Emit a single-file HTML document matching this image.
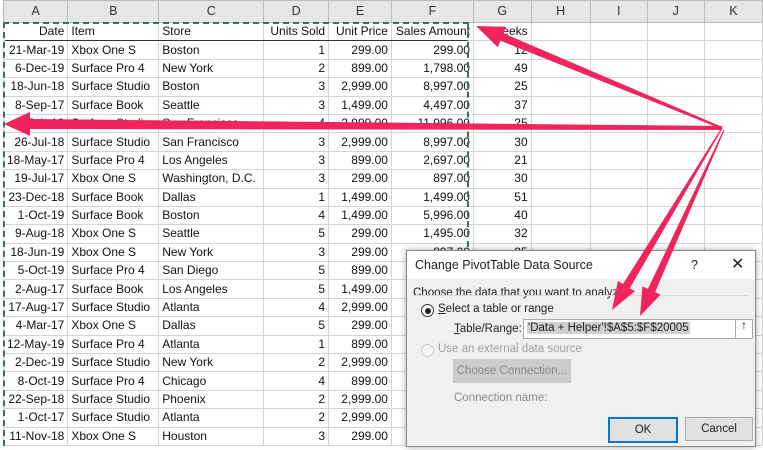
<!DOCTYPE html>
<html style="overflow:hidden;height:450px"><head><style>
body{margin:0;width:763px;height:450px;overflow:hidden;background:#fff;font-family:"Liberation Sans",sans-serif;position:relative}
table{border-collapse:collapse;table-layout:fixed;position:absolute;left:3px;top:0}
td{border:1px solid #d4d4d4;height:17.4px;padding:0 3px;font-size:12px;white-space:nowrap;overflow:hidden;line-height:17px;color:#111}
tr.h td{background:#e6e6e6;height:21px;text-align:center;color:#333;border-color:#bcbcbc;font-size:12.5px}
td.r{text-align:right}
.dlg{position:absolute;left:406px;top:250px;width:348px;height:195px;background:#f0f0f0;border:1px solid #8a8a8a;box-shadow:0 0 6px rgba(0,0,0,.35);font-size:11.5px;color:#222}
.ttl{height:28px;background:#fff;line-height:28px;padding-left:8px;font-size:12.5px;position:relative}
.btn{position:absolute;border:1px solid #adadad;background:#e1e1e1;text-align:center;line-height:22px;height:22px}
</style></head><body>
<table>
<colgroup><col style="width:61px"><col style="width:91px"><col style="width:105px"><col style="width:65px"><col style="width:63px"><col style="width:82px"><col style="width:58px"><col style="width:60px"><col style="width:58px"><col style="width:58px"><col style="width:59px"></colgroup>
<tr class="h"><td>A</td><td>B</td><td>C</td><td>D</td><td>E</td><td>F</td><td>G</td><td>H</td><td>I</td><td>J</td><td>K</td></tr>
<tr><td class="r">Date</td><td>Item</td><td>Store</td><td class="r">Units Sold</td><td class="r">Unit Price</td><td class="r">Sales Amount</td><td class="r">Weeks</td><td></td><td></td><td></td><td></td></tr>
<tr><td class="r">21-Mar-19</td><td>Xbox One S</td><td>Boston</td><td class="r">1</td><td class="r">299.00</td><td class="r">299.00</td><td class="r">12</td><td></td><td></td><td></td><td></td></tr>
<tr><td class="r">6-Dec-19</td><td>Surface Pro 4</td><td>New York</td><td class="r">2</td><td class="r">899.00</td><td class="r">1,798.00</td><td class="r">49</td><td></td><td></td><td></td><td></td></tr>
<tr><td class="r">18-Jun-18</td><td>Surface Studio</td><td>Boston</td><td class="r">3</td><td class="r">2,999.00</td><td class="r">8,997.00</td><td class="r">25</td><td></td><td></td><td></td><td></td></tr>
<tr><td class="r">8-Sep-17</td><td>Surface Book</td><td>Seattle</td><td class="r">3</td><td class="r">1,499.00</td><td class="r">4,497.00</td><td class="r">37</td><td></td><td></td><td></td><td></td></tr>
<tr><td class="r">1-Feb-18</td><td>Surface Studio</td><td>San Francisco</td><td class="r">4</td><td class="r">2,999.00</td><td class="r">11,996.00</td><td class="r">25</td><td></td><td></td><td></td><td></td></tr>
<tr><td class="r">26-Jul-18</td><td>Surface Studio</td><td>San Francisco</td><td class="r">3</td><td class="r">2,999.00</td><td class="r">8,997.00</td><td class="r">30</td><td></td><td></td><td></td><td></td></tr>
<tr><td class="r">18-May-17</td><td>Surface Pro 4</td><td>Los Angeles</td><td class="r">3</td><td class="r">899.00</td><td class="r">2,697.00</td><td class="r">21</td><td></td><td></td><td></td><td></td></tr>
<tr><td class="r">19-Jul-17</td><td>Xbox One S</td><td>Washington, D.C.</td><td class="r">3</td><td class="r">299.00</td><td class="r">897.00</td><td class="r">30</td><td></td><td></td><td></td><td></td></tr>
<tr><td class="r">23-Dec-18</td><td>Surface Book</td><td>Dallas</td><td class="r">1</td><td class="r">1,499.00</td><td class="r">1,499.00</td><td class="r">51</td><td></td><td></td><td></td><td></td></tr>
<tr><td class="r">1-Oct-19</td><td>Surface Book</td><td>Boston</td><td class="r">4</td><td class="r">1,499.00</td><td class="r">5,996.00</td><td class="r">40</td><td></td><td></td><td></td><td></td></tr>
<tr><td class="r">9-Aug-18</td><td>Xbox One S</td><td>Seattle</td><td class="r">5</td><td class="r">299.00</td><td class="r">1,495.00</td><td class="r">32</td><td></td><td></td><td></td><td></td></tr>
<tr><td class="r">18-Jun-19</td><td>Xbox One S</td><td>New York</td><td class="r">3</td><td class="r">299.00</td><td class="r">897.00</td><td class="r">25</td><td></td><td></td><td></td><td></td></tr>
<tr><td class="r">5-Oct-19</td><td>Surface Pro 4</td><td>San Diego</td><td class="r">5</td><td class="r">899.00</td><td class="r">4,495.00</td><td class="r">40</td><td></td><td></td><td></td><td></td></tr>
<tr><td class="r">2-Aug-17</td><td>Surface Book</td><td>Los Angeles</td><td class="r">5</td><td class="r">1,499.00</td><td class="r">7,495.00</td><td class="r">31</td><td></td><td></td><td></td><td></td></tr>
<tr><td class="r">17-Aug-17</td><td>Surface Studio</td><td>Atlanta</td><td class="r">4</td><td class="r">2,999.00</td><td class="r">11,996.00</td><td class="r">33</td><td></td><td></td><td></td><td></td></tr>
<tr><td class="r">4-Mar-17</td><td>Xbox One S</td><td>Dallas</td><td class="r">5</td><td class="r">299.00</td><td class="r">1,495.00</td><td class="r">9</td><td></td><td></td><td></td><td></td></tr>
<tr><td class="r">12-May-19</td><td>Surface Pro 4</td><td>Atlanta</td><td class="r">1</td><td class="r">899.00</td><td class="r">899.00</td><td class="r">20</td><td></td><td></td><td></td><td></td></tr>
<tr><td class="r">2-Dec-19</td><td>Surface Studio</td><td>New York</td><td class="r">2</td><td class="r">2,999.00</td><td class="r">5,998.00</td><td class="r">49</td><td></td><td></td><td></td><td></td></tr>
<tr><td class="r">8-Oct-19</td><td>Surface Pro 4</td><td>Chicago</td><td class="r">4</td><td class="r">899.00</td><td class="r">3,596.00</td><td class="r">41</td><td></td><td></td><td></td><td></td></tr>
<tr><td class="r">22-Sep-18</td><td>Surface Studio</td><td>Phoenix</td><td class="r">2</td><td class="r">2,999.00</td><td class="r">5,998.00</td><td class="r">38</td><td></td><td></td><td></td><td></td></tr>
<tr><td class="r">1-Oct-17</td><td>Surface Studio</td><td>Atlanta</td><td class="r">2</td><td class="r">2,999.00</td><td class="r">5,998.00</td><td class="r">40</td><td></td><td></td><td></td><td></td></tr>
<tr><td class="r">11-Nov-18</td><td>Xbox One S</td><td>Houston</td><td class="r">3</td><td class="r">299.00</td><td class="r">897.00</td><td class="r">45</td><td></td><td></td><td></td><td></td></tr>
</table>
<div style="position:absolute;left:3px;top:22px;width:466px;height:434px;border:2px dashed #3f6f55;border-bottom:none;box-sizing:border-box"></div>
<div style="position:absolute;left:5px;top:40px;width:463px;height:1px;background:#333"></div>
<div class="dlg">
 <div class="ttl">Change PivotTable Data Source<span style="position:absolute;left:284px">?</span><span style="position:absolute;left:324px;font-size:16px">✕</span></div>
 <div style="position:absolute;left:6px;top:36px">Choose the data that you want to analyze</div>
 <div style="position:absolute;left:6px;top:44px;width:336px;height:1px;background:#d8d8d8"></div>
 <div style="position:absolute;left:14px;top:53px;width:11px;height:11px;border:1px solid #333;border-radius:50%;background:#fff"><div style="margin:2.5px;width:6px;height:6px;border-radius:50%;background:#222"></div></div>
 <div style="position:absolute;left:31px;top:52px"><u>S</u>elect a table or range</div>
 <div style="position:absolute;left:47px;top:72px"><u>T</u>able/Range:</div>
 <div style="position:absolute;left:116px;top:68px;width:228px;height:18px;background:#fff;border:1px solid #aaa"><span style="position:absolute;left:3px;top:2px;background:#d0d0d0;padding:0 1px">'Data + Helper'!$A$5:$F$20005</span><span style="position:absolute;right:0;top:0;width:16px;height:18px;border-left:1px solid #aaa;text-align:center;font-weight:bold">↑</span></div>
 <div style="position:absolute;left:14px;top:93px;width:11px;height:11px;border:1px solid #ccc;border-radius:50%;background:#f4f4f4"></div>
 <div style="position:absolute;left:31px;top:92px;color:#a0a0a0">Use an external data source</div>
 <div class="btn" style="left:46px;top:108px;width:116px;border-color:#ccc;background:#ccc;color:#8a8a8a">Choose Connection...</div>
 <div style="position:absolute;left:47px;top:141px;color:#8a8a8a">Connection name:</div>
 <div class="btn" style="left:201px;top:166px;width:66px;border:2px solid #0078d7">OK</div>
 <div class="btn" style="left:278px;top:166px;width:66px">Cancel</div>
</div>
<svg width="763" height="450" style="position:absolute;left:0;top:0">
<g fill="#f0255f">
<polygon points="722.4,127 503.5,33.3 506.2,26.8 476,26 497.8,47.2 500.5,40.7 721.6,129"/>
<polygon points="722,126 30,119 30,112 4,124 30,136 30,129 722,130"/>
<polygon points="722.5,128.3 629.8,288.2 634.9,291.3 612,310 617.9,280.9 623,284 721.5,127.7"/>
<polygon points="724.5,130.2 655.1,292.1 660.6,294.6 640,316 642.4,286.4 647.9,288.9 723.5,129.8"/>
</g>
</svg>
</body></html>
